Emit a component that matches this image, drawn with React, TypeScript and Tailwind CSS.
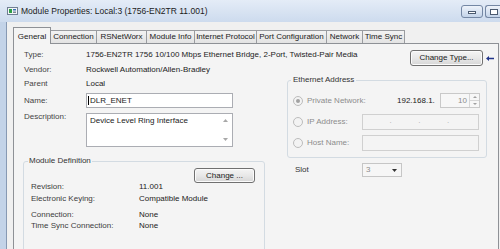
import React from "react";

const tabs = [
  { label: "General", w: "w-[38px]", active: true },
  { label: "Connection", w: "w-[47px]" },
  { label: "RSNetWorx", w: "w-[51px]" },
  { label: "Module Info", w: "w-[49px]" },
  { label: "Internet Protocol", w: "w-[63px]" },
  { label: "Port Configuration", w: "w-[71px]" },
  { label: "Network", w: "w-[37px]" },
  { label: "Time Sync", w: "w-[43px]" },
];

function WinButton({ label, className }: { label: string; className: string }) {
  return (
    <div
      className={`flex items-center justify-center rounded-[3px] border border-[#707070] bg-linear-to-b from-[#f4f4f4] via-[#e8e8e8] to-[#d6d6d6] text-[8px] text-[#1a1a1a] shadow-[inset_0_0_0_1px_#fbfbfb] ${className}`}
    >
      {label}
    </div>
  );
}

function Radio({ checked }: { checked?: boolean }) {
  return (
    <div className="ml-[5px] flex h-[10px] w-[10px] shrink-0 items-center justify-center rounded-full border border-[#bcbcbc] bg-[#f3f3f3]">
      {checked && <div className="h-[4px] w-[4px] rounded-full bg-[#a2a2a2]" />}
    </div>
  );
}

function Row({ label, value, className }: { label: string; value: string; className: string }) {
  return (
    <div className={`flex items-center whitespace-nowrap ${className}`}>
      <span className="w-[108px] shrink-0 text-[#3c3c3c]">{label}</span>
      <span className="text-[#222]">{value}</span>
    </div>
  );
}

export default function App() {
  return (
    <div className="h-[249px] w-[500px] overflow-hidden bg-[#c3d3e8] font-['Liberation_Sans',Arial,sans-serif] text-[8px]">
      {/* title bar */}
      <div className="flex h-[22px] items-center bg-linear-to-b from-[#e4ecf7] to-[#cddbee]">
        <svg width="11" height="8" viewBox="0 0 11 8" className="ml-[7px]">
          <rect x="0.5" y="0.5" width="10" height="7" fill="#f4f6f8" stroke="#6f7f93" />
          <rect x="2" y="2" width="3" height="4" fill="#2f9e47" />
          <rect x="6" y="2" width="3" height="1.5" fill="#3b6fb6" />
          <rect x="6" y="4.5" width="3" height="1.5" fill="#7a8898" />
        </svg>
        <span className="ml-[3px] text-[8.5px] text-[#1b1b1b]">Module Properties: Local:3 (1756-EN2TR 11.001)</span>
        <div className="ml-auto flex h-[14px] items-start gap-[2px] self-start pt-[5px]">
          <div className="flex h-[13px] w-[22px] items-end justify-center rounded-[3px] border border-[#7487a4] bg-linear-to-b from-[#eef3fa] to-[#c3d3e9] pb-[3px]">
            <div className="h-[3px] w-[8px] border border-[#4b5a70] bg-white" />
          </div>
          <div className="flex h-[13px] w-[15px] items-center justify-start rounded-l-[3px] border border-r-0 border-[#7487a4] bg-linear-to-b from-[#eef3fa] to-[#c3d3e9] pl-[4px]">
            <div className="h-[6px] w-[8px] border border-[#4b5a70] bg-white" />
          </div>
        </div>
      </div>

      <div className="flex h-[227px]">
        <div className="w-[6px]" />
        <div className="flex-1 border-l border-[#8799b3] bg-[#f0f0f0] pl-[6px] pt-[5px]">
          {/* tabs */}
          <div className="flex h-[17px] items-end">
            {tabs.map((t, i) =>
              t.active ? (
                <div
                  key={t.label}
                  className={`relative z-10 flex h-[17px] items-start justify-center border border-b-0 border-[#8e9196] bg-[#f4f4f4] pt-[3px] text-[#1a1a1a] ${t.w}`}
                >
                  {t.label}
                </div>
              ) : (
                <div
                  key={t.label}
                  className={`mb-[1px] flex h-[13px] items-center justify-center whitespace-nowrap border border-b-0 border-[#9a9ca0] bg-linear-to-b from-[#f3f3f3] to-[#e3e3e3] text-[#1a1a1a] ${i > 0 ? "-ml-px" : ""} ${t.w}`}
                >
                  {t.label}
                </div>
              )
            )}
          </div>

          {/* panel */}
          <div className="-mt-px flex h-[220px] w-[486px] border border-b-0 border-[#8e9196] bg-[#f4f4f4]">
            {/* left column */}
            <div className="w-[251px] shrink-0 pl-[10px]">
              <div className="mt-[4px] flex h-[14px] items-center whitespace-nowrap">
                <span className="w-[62px] shrink-0 text-[#444]">Type:</span>
                <span className="text-[#222]">1756-EN2TR 1756 10/100 Mbps Ethernet Bridge, 2-Port, Twisted-Pair Media</span>
              </div>
              <div className="mt-[1px] flex h-[14px] items-center">
                <span className="w-[62px] shrink-0 text-[#444]">Vendor:</span>
                <span className="text-[#222]">Rockwell Automation/Allen-Bradley</span>
              </div>
              <div className="flex h-[14px] items-center">
                <span className="w-[62px] shrink-0 text-[#444]">Parent</span>
                <span className="text-[#222]">Local</span>
              </div>
              <div className="mt-[2px] flex h-[15px] items-center">
                <span className="w-[62px] shrink-0 text-[#444]">Name:</span>
                <div className="flex h-[15px] w-[147px] items-center border border-[#abadb3] bg-white pl-[1px] text-[#222]">
                  <span className="mr-px h-[9px] w-px bg-black" />
                  DLR_ENET
                </div>
              </div>
              <div className="mt-[5px] flex items-start">
                <span className="-mt-px w-[62px] shrink-0 leading-[10px] text-[#444]">Description:</span>
                <div className="flex h-[34px] w-[147px] border border-[#abadb3] bg-white">
                  <span className="flex-1 pl-[3px] pt-[2px] leading-[10px] text-[#222]">Device Level Ring Interface</span>
                  <div className="flex w-[13px] flex-col items-center justify-between py-[5px]">
                    <svg width="5" height="3" viewBox="0 0 5 3">
                      <path d="M0 3 L2.5 0 L5 3 Z" fill="#a8a8a8" />
                    </svg>
                    <svg width="5" height="3" viewBox="0 0 5 3">
                      <path d="M0 0 L2.5 3 L5 0 Z" fill="#a8a8a8" />
                    </svg>
                  </div>
                </div>
              </div>

              <fieldset className="-ml-px mt-[7px] h-[120px] w-[242px] rounded-[3px] border border-[#d3dbe2]">
                <legend className="ml-[4px] px-[1px] leading-[14px] text-[#333]">Module Definition</legend>
                <div className="flex flex-col">
                  <WinButton label="Change ..." className="mr-[9px] h-[15px] w-[61px] self-end" />
                  <div className="pl-[7px]">
                    <Row label="Revision:" value="11.001" className="-mt-[2px] h-[12px]" />
                    <Row label="Electronic Keying:" value="Compatible Module" className="h-[12px]" />
                    <Row label="Connection:" value="None" className="mt-[4px] h-[11px]" />
                    <Row label="Time Sync Connection:" value="None" className="h-[11px]" />
                  </div>
                </div>
              </fieldset>
            </div>

            {/* right column */}
            <div className="ml-[22px] w-[210px]">
              <div className="mt-[6px] flex items-center justify-end gap-[3px] pr-[3px]">
                <WinButton label="Change Type..." className="h-[16px] w-[73px]" />
                <svg width="8" height="5" viewBox="0 0 8 5">
                  <path d="M0 2.5 L3 0 L3 1.7 L8 1.7 L8 3.3 L3 3.3 L3 5 Z" fill="#22358a" />
                </svg>
              </div>

              <fieldset className="mt-[7px] w-[200px] rounded-[3px] border border-[#d3dbe2] pb-[6px]">
                <legend className="ml-[3px] px-[2px] leading-[14px] text-[#333]">Ethernet Address</legend>
                <div className="mt-[6px] flex h-[15px] items-center whitespace-nowrap">
                  <Radio checked />
                  <span className="ml-[4px] w-[90px] shrink-0 text-[#8c8c8c]">Private Network:</span>
                  <span className="w-[43px] shrink-0 text-[#222]">192.168.1.</span>
                  <div className="flex h-[15px] w-[40px] border border-[#c9c9c9] bg-[#f7f7f7]">
                    <span className="flex flex-1 items-center justify-end pr-[2px] text-[#8c8c8c]">10</span>
                    <div className="flex w-[10px] flex-col border-l border-[#d6d6d6]">
                      <div className="flex flex-1 items-center justify-center border-b border-[#d6d6d6]">
                        <svg width="4" height="2" viewBox="0 0 4 2">
                          <path d="M0 2 L2 0 L4 2 Z" fill="#a0a0a0" />
                        </svg>
                      </div>
                      <div className="flex flex-1 items-center justify-center">
                        <svg width="4" height="2" viewBox="0 0 4 2">
                          <path d="M0 0 L2 2 L4 0 Z" fill="#a0a0a0" />
                        </svg>
                      </div>
                    </div>
                  </div>
                </div>
                <div className="mt-[6px] flex h-[16px] items-center">
                  <Radio />
                  <span className="ml-[4px] w-[55px] shrink-0 text-[#8c8c8c]">IP Address:</span>
                  <div className="grid h-[16px] w-[117px] grid-cols-4 border border-[#d0d0d0] bg-[#f4f4f4] text-[#b0b0b0]">
                    <span className="text-right leading-[12px]">.</span>
                    <span className="text-right leading-[12px]">.</span>
                    <span className="text-right leading-[12px]">.</span>
                    <span />
                  </div>
                </div>
                <div className="mt-[5px] flex h-[16px] items-center">
                  <Radio />
                  <span className="ml-[4px] w-[55px] shrink-0 text-[#8c8c8c]">Host Name:</span>
                  <div className="h-[16px] w-[117px] border border-[#d0d0d0] bg-[#f4f4f4]" />
                </div>
              </fieldset>

              <div className="mt-[5px] flex h-[14px] items-center">
                <span className="ml-[8px] w-[67px] shrink-0 text-[#333]">Slot</span>
                <div className="flex h-[14px] w-[40px] items-center border border-[#c6c6c6] bg-[#f6f6f6] pl-[3px] pr-[4px] text-[#8c8c8c]">
                  <span className="flex-1">3</span>
                  <svg width="5" height="3" viewBox="0 0 5 3">
                    <path d="M0 0 L2.5 3 L5 0 Z" fill="#333" />
                  </svg>
                </div>
              </div>
            </div>
          </div>
        </div>
      </div>
    </div>
  );
}
